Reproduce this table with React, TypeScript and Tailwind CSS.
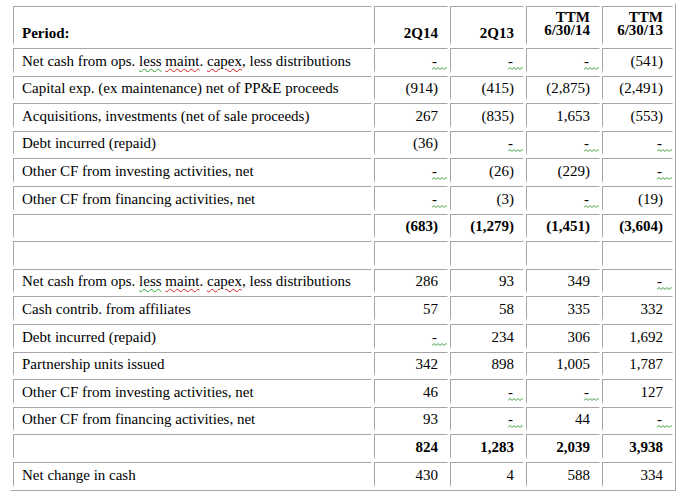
import React from 'react';

type Cell = string | null; // null => dash with grammar squiggle

interface Row {
  label?: React.ReactNode;
  values?: Cell[];
  bold?: boolean;
}

const LINE = 'border-[#a6a6a6]';

// the little "-" Word leaves behind, with its green grammar squiggle
function Dash() {
  return (
    <span className="relative inline-block w-[15px] -mr-[9px] text-left">
      -
      <svg className="absolute left-0 bottom-0 w-[15px] h-[3px]" viewBox="0 0 15 3">
        <polyline
          points="0,2.5 2,0.5 4,2.5 6,0.5 8,2.5 10,0.5 12,2.5 14,0.5 15,1.5"
          fill="none"
          stroke="#3a9a3a"
          strokeWidth="1"
        />
      </svg>
    </span>
  );
}

const Squiggle = ({ children, red }: { children: React.ReactNode; red?: boolean }) => (
  <span
    className={
      red
        ? 'underline decoration-wavy decoration-[#d42020] decoration-1 underline-offset-[2px]'
        : 'underline decoration-wavy decoration-[#2f9f2f] decoration-1 underline-offset-[2px]'
    }
  >
    {children}
  </span>
);

const netCash = (
  <>
    Net cash from ops. <Squiggle>less</Squiggle> <Squiggle red>maint</Squiggle>. <Squiggle red>capex</Squiggle>, less distributions
  </>
);

const rows: Row[] = [
  { label: netCash, values: [null, null, null, '(541)'] },
  { label: 'Capital exp. (ex maintenance) net of PP&E proceeds', values: ['(914)', '(415)', '(2,875)', '(2,491)'] },
  { label: 'Acquisitions, investments (net of sale proceeds)', values: ['267', '(835)', '1,653', '(553)'] },
  { label: 'Debt incurred (repaid)', values: ['(36)', null, null, null] },
  { label: 'Other CF from investing activities, net', values: [null, '(26)', '(229)', null] },
  { label: 'Other CF from financing activities, net', values: [null, '(3)', null, '(19)'] },
  { values: ['(683)', '(1,279)', '(1,451)', '(3,604)'], bold: true },
  {},
  { label: netCash, values: ['286', '93', '349', null] },
  { label: 'Cash contrib. from affiliates', values: ['57', '58', '335', '332'] },
  { label: 'Debt incurred (repaid)', values: [null, '234', '306', '1,692'] },
  { label: 'Partnership units issued', values: ['342', '898', '1,005', '1,787'] },
  { label: 'Other CF from investing activities, net', values: ['46', null, null, '127'] },
  { label: 'Other CF from financing activities, net', values: ['93', null, '44', null] },
  { values: ['824', '1,283', '2,039', '3,938'], bold: true },
  { label: 'Net change in cash', values: ['430', '4', '588', '334'] },
];

const cellBase = `border-t border-l border-r border-b-4 ${LINE} border-r-white border-b-white p-0 align-bottom`;
const labelCell = `${cellBase} pl-[8px] text-left`;
const numCell = `${cellBase} pr-[9px] text-right`;

export default function App() {
  return (
    <div className="bg-white min-h-[498px] pt-[3px] pl-[10px] text-black text-[15px] leading-[normal] font-['Liberation_Serif','Times_New_Roman',serif]">
      <table
        className={`w-[666px] table-fixed border-separate border-spacing-[2px] border border-t-white border-l-white ${LINE}`}
      >
        <thead>
          <tr className="h-[40px]">
            <th className={`${labelCell} w-[359px] font-bold`}>Period:</th>
            <th className={`${numCell} w-[74px] font-bold`}>2Q14</th>
            <th className={`${numCell} w-[74px] font-bold`}>2Q13</th>
            <th className={`${numCell} w-[74px] font-bold`}>
              <div className="leading-[13px] mb-[5px]">TTM<br />6/30/14</div>
            </th>
            <th className={`${numCell} w-[71px] font-bold`}>
              <div className="leading-[13px] mb-[5px]">TTM<br />6/30/13</div>
            </th>
          </tr>
        </thead>
        <tbody>
          {rows.map((row, i) => (
            <tr key={i} className="h-[25.6px]">
              <td className={labelCell}>{row.label}</td>
              {(row.values ?? ['', '', '', '']).map((v, j) => (
                <td key={j} className={`${numCell} ${row.bold ? 'font-bold' : ''}`}>
                  {v === null ? <Dash /> : v}
                </td>
              ))}
            </tr>
          ))}
        </tbody>
      </table>
    </div>
  );
}
